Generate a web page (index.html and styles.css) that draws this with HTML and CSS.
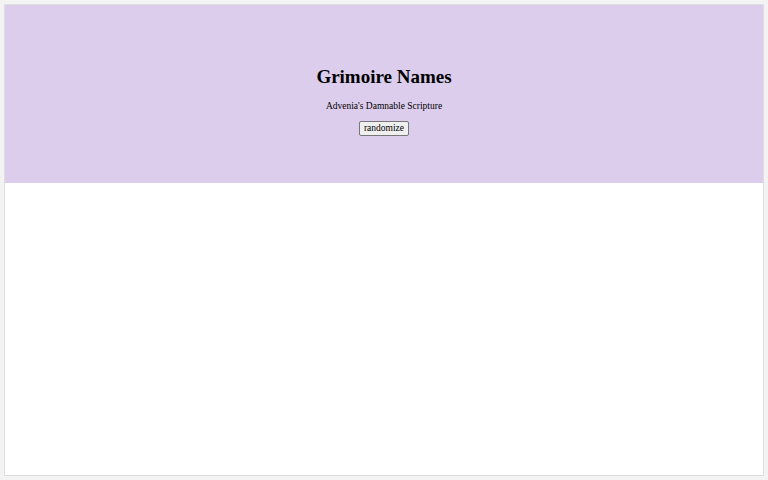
FILE: index.html
```html
<!DOCTYPE html>
<html lang="en">
<head>
<meta charset="utf-8">
<title>Grimoire Names</title>
<link rel="stylesheet" href="styles.css">
</head>
<body>
<main class="card">
  <header class="hero">
    <h1 class="hero-title">Grimoire Names</h1>
    <p class="hero-name">Advenia's Damnable Scripture</p>
    <button class="hero-button" type="button">randomize</button>
  </header>
</main>
</body>
</html>
```
FILE: styles.css
```css
html, body {
  margin: 0;
  background: #f3f3f3;
}

body {
  padding: 4px;
  font-family: "Liberation Serif", "Times New Roman", serif;
  color: #000;
}

.card {
  box-sizing: border-box;
  height: 472px;
  width: 760px;
  background: #fff;
  border: 1px solid #dedede;
}

.hero {
  box-sizing: border-box;
  height: 178px;
  background: #ddcdec;
  padding-top: 60px;
  display: flex;
  flex-direction: column;
  align-items: center;
}

.hero-title {
  margin: 0;
  font-size: 19px;
  line-height: 24px;
  font-weight: bold;
}

.hero-name {
  margin: 11px 0 0;
  font-size: 9.5px;
  line-height: 12px;
}

.hero-button {
  margin-top: 9px;
  font-family: "Liberation Serif", "Times New Roman", serif;
  font-size: 9.5px;
  padding: 1px 4px 2px;
  background: #efefef;
  border: 1px solid #767676;
  border-radius: 2px;
  color: #000;
}
```
